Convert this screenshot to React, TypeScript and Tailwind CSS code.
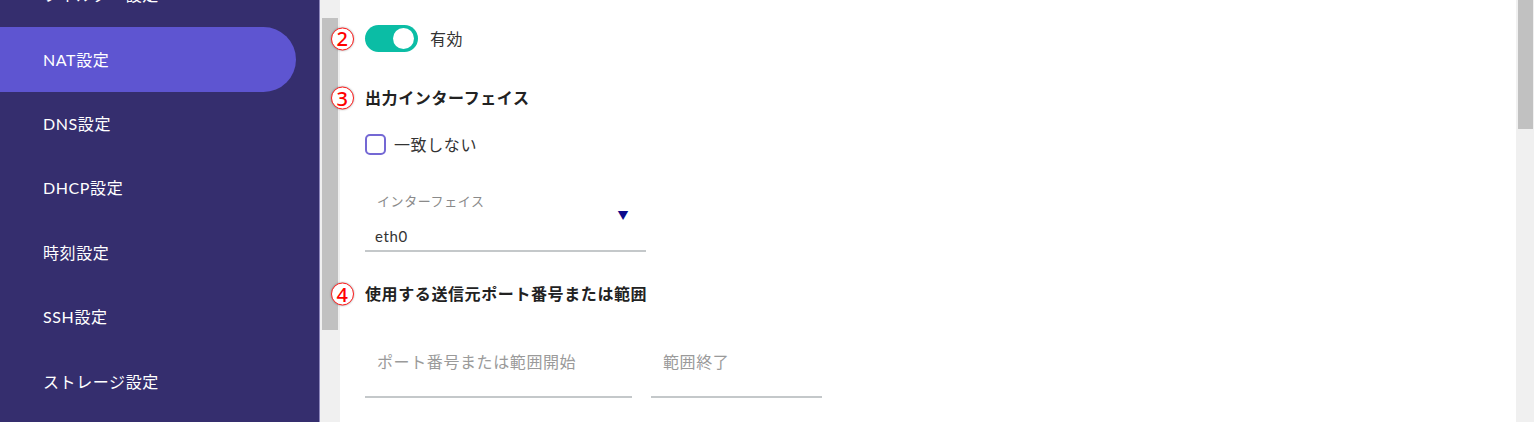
import React from "react";

const menu = ["フィルター設定", "NAT設定", "DNS設定", "DHCP設定", "時刻設定", "SSH設定", "ストレージ設定"];

const Mark = ({ n }: { n: string }) => (
  <span className="absolute left-[-34px] top-1/2 -translate-y-1/2 flex h-[23px] w-[23px] items-center justify-center rounded-full border border-[#ff1a1a] bg-white text-[20px] font-medium leading-none text-[#ff0000] shadow-[0_0_2px_rgba(0,0,0,0.35)] font-['Noto_Sans',sans-serif]">
    {n}
  </span>
);

const App = () => {
  return (
    <div className="flex h-[422px] w-[1536px] overflow-hidden bg-white font-['Lato','Noto_Sans_CJK_JP',sans-serif] tracking-[0.6px]">
      {/* Sidebar */}
      <div className="w-[320px] shrink-0 bg-[#352e6e] border-r border-[#8d86bd] overflow-hidden">
        <ul className="mt-[-37px] pr-[23px]">
          {menu.map((m) => (
            <li
              key={m}
              className={
                "flex h-[64.4px] items-center pl-[43px] text-[16px] text-white " +
                (m === "NAT設定" ? "bg-[#5e55d1] rounded-r-full" : "")
              }
            >
              {m}
            </li>
          ))}
        </ul>
      </div>

      {/* sidebar scrollbar */}
      <div className="w-[20px] shrink-0 bg-[#f0f0f0] px-[2px]">
        <div className="mt-[18px] h-[312px] bg-[#c1c1c1]" />
      </div>

      {/* Main */}
      <div className="flex-1 pl-[25px] pt-[25px] text-[#333]">
        <div className="relative flex h-[27px] items-center gap-[12px]">
          <Mark n="2" />
          <div className="flex h-[27px] w-[53px] items-center justify-end rounded-full bg-[#0bbda5] pr-[4px]">
            <div className="h-[21px] w-[21px] rounded-full bg-white" />
          </div>
          <span className="text-[16px]">有効</span>
        </div>

        <div className="relative mt-[35px] flex h-[22px] items-center">
          <Mark n="3" />
          <span className="text-[16px] font-bold text-[#222]">出力インターフェイス</span>
        </div>

        <label className="mt-[25px] flex h-[21px] items-center gap-[8px]">
          <span className="h-[21px] w-[21px] rounded-[5px] border-2 border-[#7468d4] bg-white" />
          <span className="text-[16px] text-[#333]">一致しない</span>
        </label>

        <div className="relative mt-[38px] w-[281px] border-b-2 border-[#c4c8ca] pb-[4px]">
          <div className="pl-[12px] text-[13px] leading-[16px] text-[#8a8a8a]">インターフェイス</div>
          <div className="mt-[17px] pl-[10px] text-[15px] leading-[20px] text-[#333]">eth0</div>
          <span className="absolute right-[17px] top-[17px] text-[11px] leading-none text-[#0c0a8c]">▼</span>
        </div>

        <div className="relative mt-[31px] flex h-[22px] items-center">
          <Mark n="4" />
          <span className="text-[16px] font-bold text-[#222]">使用する送信元ポート番号または範囲</span>
        </div>

        <div className="mt-[45px] flex gap-[19px]">
          <div className="w-[267px] border-b-2 border-[#c4c8ca] pb-[22px] pl-[12px] text-[16px] leading-[24px] text-[#9a9a9a]">
            ポート番号または範囲開始
          </div>
          <div className="w-[171px] border-b-2 border-[#c4c8ca] pb-[22px] pl-[12px] text-[16px] leading-[24px] text-[#9a9a9a]">
            範囲終了
          </div>
        </div>
      </div>

      {/* page scrollbar */}
      <div className="w-[18px] shrink-0 bg-[#f0f0f0] pl-[2px]">
        <div className="h-[129px] w-[15px] bg-[#c1c1c1]" />
      </div>
      <div className="w-[2px] shrink-0 bg-white" />
    </div>
  );
};

export default App;
